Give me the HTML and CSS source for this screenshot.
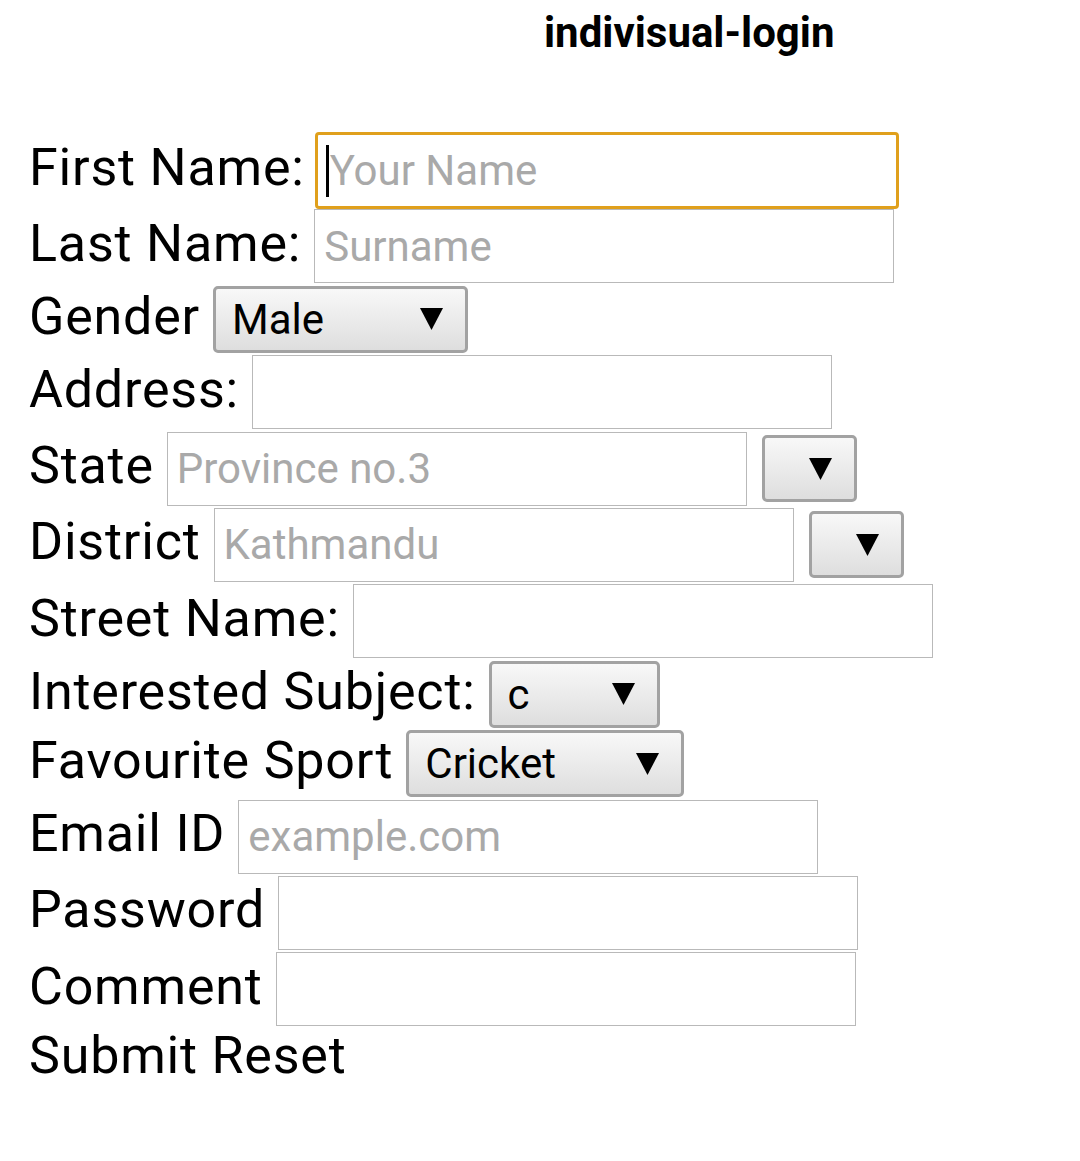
FILE: index.html
```html
<!DOCTYPE html>
<html lang="en">
<head>
<meta charset="utf-8">
<title>indivisual-login</title>
<link rel="stylesheet" href="styles.css">
</head>
<body>
<h1 class="title">indivisual-login</h1>
<form class="form">
  <div class="row">
    <label class="label">First Name:</label>
    <span class="field-wrap">
      <input class="field field-focused" type="text" placeholder="Your Name">
      <span class="caret"></span>
    </span>
  </div>
  <div class="row">
    <label class="label">Last Name:</label>
    <input class="field" type="text" placeholder="Surname">
  </div>
  <div class="row">
    <label class="label">Gender</label>
    <div class="select sel-gender"><span>Male</span><svg class="arrow" viewBox="0 0 23 22"><polygon points="0,0 23,0 11.5,22"/></svg></div>
  </div>
  <div class="row">
    <label class="label">Address:</label>
    <input class="field" type="text">
  </div>
  <div class="row">
    <label class="label">State</label>
    <input class="field" type="text" placeholder="Province no.3">
    <div class="select sel-btn"><svg class="arrow" viewBox="0 0 23 22"><polygon points="0,0 23,0 11.5,22"/></svg></div>
  </div>
  <div class="row">
    <label class="label">District</label>
    <input class="field" type="text" placeholder="Kathmandu">
    <div class="select sel-btn"><svg class="arrow" viewBox="0 0 23 22"><polygon points="0,0 23,0 11.5,22"/></svg></div>
  </div>
  <div class="row">
    <label class="label">Street Name:</label>
    <input class="field" type="text">
  </div>
  <div class="row">
    <label class="label">Interested Subject:</label>
    <div class="select sel-subject"><span>c</span><svg class="arrow" viewBox="0 0 23 22"><polygon points="0,0 23,0 11.5,22"/></svg></div>
  </div>
  <div class="row">
    <label class="label">Favourite Sport</label>
    <div class="select sel-sport"><span>Cricket</span><svg class="arrow" viewBox="0 0 23 22"><polygon points="0,0 23,0 11.5,22"/></svg></div>
  </div>
  <div class="row">
    <label class="label">Email ID</label>
    <input class="field" type="text" placeholder="example.com">
  </div>
  <div class="row">
    <label class="label">Password</label>
    <input class="field" type="password">
  </div>
  <div class="row">
    <label class="label">Comment</label>
    <input class="field" type="text">
  </div>
  <div class="actions">Submit Reset</div>
</form>
</body>
</html>
```
FILE: styles.css
```css
html, body {
  margin: 0;
  padding: 0;
  background: #ffffff;
}

body {
  font-family: Roboto, "Liberation Sans", sans-serif;
  color: #000000;
}

.title {
  margin: 0;
  padding: 8px 0 0 544px;
  font-size: 42px;
  font-weight: 700;
  line-height: 49px;
}

.form {
  display: flex;
  flex-direction: column;
  gap: 2.4px;
  padding: 77px 0 0 29px;
}

.row {
  display: flex;
  align-items: baseline;
  gap: 13px;
}

.label {
  font-size: 52px;
  letter-spacing: 0.8px;
  line-height: 61px;
  white-space: nowrap;
}

.field-wrap {
  position: relative;
  display: flex;
  margin: -2px 0 -2px -3px;
}

.field {
  box-sizing: border-box;
  width: 580px;
  height: 74px;
  margin: 0;
  padding: 0 9px;
  border: 1.5px solid #b9b9b9;
  border-radius: 0;
  background: #ffffff;
  font-family: Roboto, "Liberation Sans", sans-serif;
  font-size: 42px;
  color: #000000;
  outline: none;
}

.field::placeholder {
  color: #a9a9a9;
}

.field-focused {
  width: 584px;
  height: 77px;
  border: 3px solid #e0a01c;
  border-radius: 4px;
  padding-left: 12px;
}

.caret {
  position: absolute;
  left: 11px;
  top: 13px;
  width: 3px;
  height: 52px;
  background: #000000;
}

.select {
  box-sizing: border-box;
  height: 67px;
  display: flex;
  align-items: center;
  justify-content: space-between;
  padding: 0 22px 0 16px;
  border: 3px solid #a2a2a2;
  border-radius: 5px;
  background: linear-gradient(#f8f8f8, #dedede);
  font-size: 42px;
  white-space: nowrap;
}

.select.sel-btn {
  justify-content: flex-end;
  align-self: center;
}

.arrow {
  width: 23px;
  height: 22px;
  flex: none;
  fill: #000000;
}

.sel-gender { width: 255px; }
.sel-subject { width: 171px; }
.sel-sport { width: 278px; }
.sel-btn { width: 95px; margin-left: 2px; }

.actions {
  font-size: 52px;
  letter-spacing: 0.8px;
  line-height: 61px;
  margin-top: -4px;
}
```
